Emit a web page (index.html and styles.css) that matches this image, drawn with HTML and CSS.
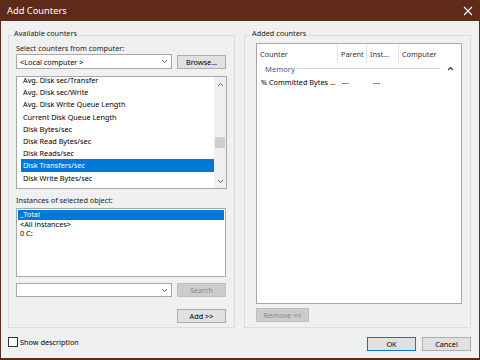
FILE: index.html
```
<!DOCTYPE html>
<html>
<head>
<meta charset="utf-8">
<link rel="stylesheet" href="styles.css">
</head>
<body>
<div class="window">
  <div class="titlebar">
    <span class="title">Add Counters</span>
    <svg class="close" width="10" height="10" viewBox="0 0 10 10"><path d="M1 1L9 9M9 1L1 9" stroke="#fff" stroke-width="1.1" fill="none"/></svg>
  </div>
  <div class="client">
    <div class="groups">
      <fieldset class="group left">
        <legend>Available counters</legend>
        <div class="label">Select counters from computer:</div>
        <div class="row">
          <div class="combo"><span>&lt;Local computer &gt;</span><svg class="chev" width="7" height="5" viewBox="0 0 7 5"><path d="M1 1L3.5 3.5L6 1" stroke="#555" stroke-width="0.9" fill="none"/></svg></div>
          <button class="btn browse">Browse...</button>
        </div>
        <div class="listbox counters">
          <div class="items">
            <div class="item">Avg. Disk sec/Transfer</div>
            <div class="item">Avg. Disk sec/Write</div>
            <div class="item">Avg. Disk Write Queue Length</div>
            <div class="item">Current Disk Queue Length</div>
            <div class="item">Disk Bytes/sec</div>
            <div class="item">Disk Read Bytes/sec</div>
            <div class="item">Disk Reads/sec</div>
            <div class="item sel">Disk Transfers/sec</div>
            <div class="item">Disk Write Bytes/sec</div>
            <div class="item">Disk Writes/sec</div>
          </div>
          <div class="vscroll">
            <svg class="arrow" width="7" height="5" viewBox="0 0 7 5"><path d="M1 4L3.5 1.5L6 4" stroke="#606060" stroke-width="1" fill="none"/></svg>
            <div class="track"><div class="thumb"></div></div>
            <svg class="arrow" width="7" height="5" viewBox="0 0 7 5"><path d="M1 1L3.5 3.5L6 1" stroke="#606060" stroke-width="1" fill="none"/></svg>
          </div>
        </div>
        <div class="label inst-label">Instances of selected object:</div>
        <div class="listbox instances">
          <div class="irow sel">_Total</div>
          <div class="irow">&lt;All instances&gt;</div>
          <div class="irow">0 C:</div>
        </div>
        <div class="row search-row">
          <div class="combo"><span></span><svg class="chev" width="7" height="5" viewBox="0 0 7 5"><path d="M1 1L3.5 3.5L6 1" stroke="#555" stroke-width="0.9" fill="none"/></svg></div>
          <button class="btn disabled browse">Search</button>
        </div>
        <div class="row end">
          <button class="btn browse">Add &gt;&gt;</button>
        </div>
      </fieldset>
      <fieldset class="group right">
        <legend>Added counters</legend>
        <div class="added">
          <div class="thead">
            <div class="th c1">Counter</div>
            <div class="th c2">Parent</div>
            <div class="th c3">Inst...</div>
            <div class="th c4">Computer</div>
          </div>
          <div class="grouphdr">
            <span class="gname">Memory</span>
            <span class="rule"></span>
            <svg class="caret" width="7" height="5" viewBox="0 0 7 5"><path d="M1 4L3.5 1.5L6 4" stroke="#333" stroke-width="1.1" fill="none"/></svg>
          </div>
          <div class="trow">
            <div class="td c1">% Committed Bytes ...</div>
            <div class="td c2">---</div>
            <div class="td c3">---</div>
          </div>
        </div>
        <button class="btn disabled remove">Remove &lt;&lt;</button>
      </fieldset>
    </div>
    <div class="footer">
      <label class="check"><span class="box"></span>Show description</label>
      <div class="actions">
        <button class="btn default">OK</button>
        <button class="btn">Cancel</button>
      </div>
    </div>
  </div>
</div>
</body>
</html>
```
FILE: styles.css
```
* { box-sizing: border-box; }
html, body { margin: 0; padding: 0; }
body {
  width: 480px;
  height: 360px;
  background: #5d2b17;
  font-family: "Noto Sans", "Open Sans", sans-serif;
  font-size: 7.3px;
  color: #000;
  overflow: hidden;
}
.window {
  width: 480px;
  height: 360px;
  display: flex;
  flex-direction: column;
}
.titlebar {
  height: 21px;
  display: flex;
  align-items: center;
  justify-content: space-between;
  padding: 0 7px 0 7px;
  background: #5d2b17;
}
.title {
  color: #fff;
  font-size: 9.3px;
  line-height: 12px;
}
.close { display: block; }
.client {
  margin: 0 1px;
  height: 337px;
  background: #f0f0f0;
  padding: 7px 8px 0 7px;
  display: flex;
  flex-direction: column;
}
.groups {
  display: flex;
  gap: 9px;
}
.group {
  margin: 0;
  width: 227px;
  height: 300px;
  border: 1px solid #dcdcdc;
  min-width: 0;
}
.group legend {
  padding: 0 2px 4px;
  line-height: 10px;
  color: #1a1a1a;
}
.group.left { padding: 1px 8px 0 7px; }
.group.left legend { margin-left: -4px; }
.group.right { padding: 1px 9px 0 11px; }
.group.right legend { margin-left: -6px; }
.label { line-height: 10px; color: #1a1a1a; }
.row { display: flex; gap: 5px; margin-top: 1px; }
.row.end { justify-content: flex-end; margin-top: 11px; }
.search-row { margin-top: 6px; }
.combo {
  width: 156px;
  height: 15px;
  background: #fff;
  border: 1px solid #a8a8a8;
  display: flex;
  align-items: center;
  justify-content: space-between;
  padding: 0 3px 0 3px;
}
.search-row .combo { height: 14px; }
.chev { display: block; }
.btn {
  font: inherit;
  color: #000;
  height: 14px;
  padding: 0;
  background: #e1e1e1;
  border: 1px solid #adadad;
  line-height: 12px;
  margin: 0;
}
.browse { width: 49px; margin-top: 1px; }
.search-row .browse { margin-top: 0; }
.btn.disabled {
  background: #cccccc;
  border-color: #bfbfbf;
  color: #8a8a8a;
}
.listbox {
  background: #fff;
  border: 1px solid #a8a8a8;
  overflow: hidden;
}
.counters {
  margin-top: 7px;
  width: 211px;
  height: 113px;
  display: flex;
}
.items {
  flex: 1;
  padding-left: 4px;
  margin-top: -3px;
}
.item {
  height: 12.2px;
  line-height: 12.2px;
  padding-left: 2px;
}
.item.sel, .irow.sel {
  background: #0078d7;
  color: #fff;
}
.vscroll {
  width: 12px;
  background: #f0f0f0;
  display: flex;
  flex-direction: column;
  align-items: center;
  padding: 5px 0 4px;
}
.vscroll .arrow { display: block; }
.track {
  flex: 1;
  width: 10px;
}
.thumb {
  margin-top: 50px;
  height: 11px;
  background: #cdcdcd;
}
.inst-label { margin-top: 6px; }
.instances {
  margin-top: 3px;
  width: 210px;
  height: 69px;
  padding: 1px 1px 0 1px;
}
.irow {
  height: 9.6px;
  line-height: 9.6px;
  padding-left: 2px;
}
.added {
  width: 206px;
  height: 261px;
  background: #fff;
  border: 1px solid #a8a8a8;
}
.thead {
  display: flex;
  height: 19px;
}
.th {
  line-height: 20px;
  color: #333;
  padding-left: 3px;
  border-right: 1px solid #e5e5e5;
}
.c1 { width: 81px; }
.c2 { width: 29px; }
.c3 { width: 32px; }
.c4 { flex: 1; border-right: none; }
.grouphdr {
  display: flex;
  align-items: center;
  height: 11px;
  padding-left: 8px;
  padding-right: 7px;
}
.gname { color: #3b5ba5; font-size: 7.6px; }
.rule {
  flex: 1;
  height: 1px;
  background: #c9d7eb;
  margin: 0 7px 0 2px;
}
.caret { display: block; }
.trow { display: flex; height: 12px; line-height: 12px; margin-top: 2px; }
.td { padding-left: 4px; }
.trow .c1 { width: 81px; }
.trow .c2 { width: 31px; }
.remove { width: 53px; margin-top: 4px; display: block; }
.footer {
  display: flex;
  justify-content: space-between;
  margin-top: 5px;
}
.check {
  display: flex;
  align-items: center;
  line-height: 12px;
}
.box {
  width: 10px;
  height: 10px;
  border: 1px solid #333;
  background: #fff;
  margin-right: 2px;
}
.actions { display: flex; gap: 6px; margin-top: 4px; }
.actions .btn { width: 49px; }
.btn.default { border-color: #0078d7; }
```
